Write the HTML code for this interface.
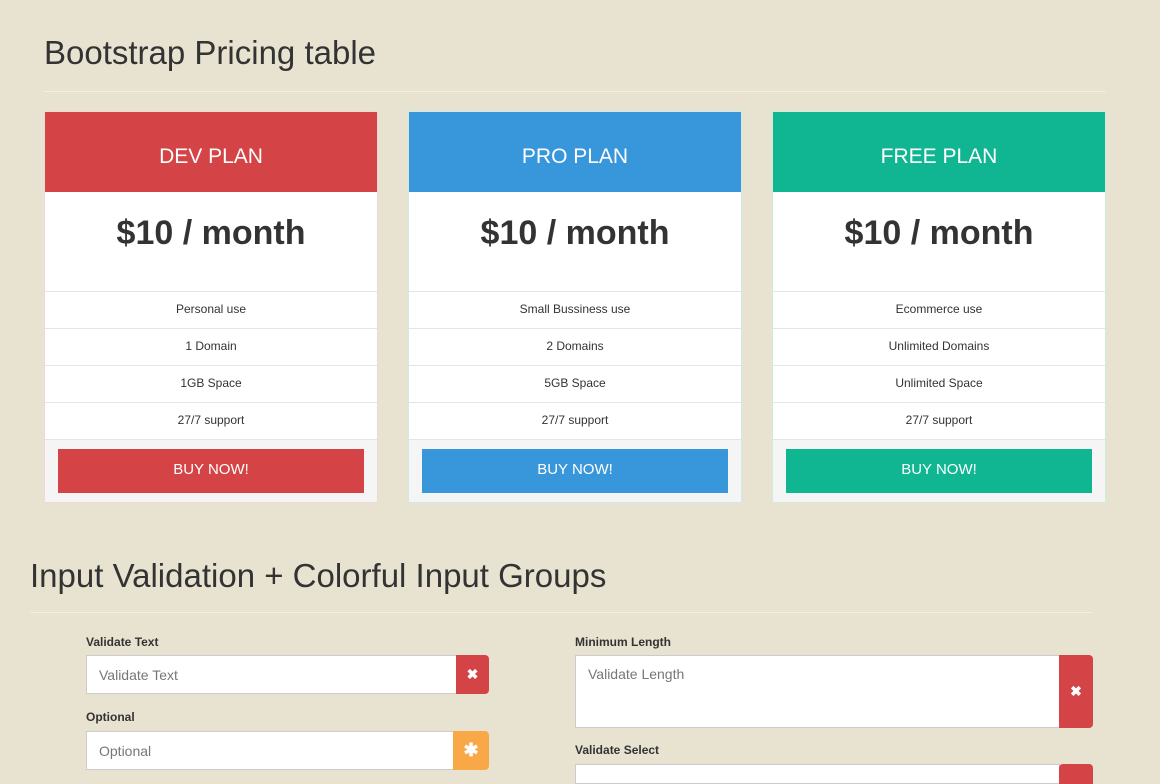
<!DOCTYPE html><html><head><style>
body{margin:0;width:1160px;height:772px;background:#e8e3d0;font-family:"Liberation Sans",sans-serif;position:relative;overflow:hidden;color:#333}
.a{position:absolute}
h1{position:absolute;margin:0;font-weight:normal;color:#333}
.card{position:absolute;top:111px;width:332px;height:390px;background:#fff;border:1px solid}
.hd{height:80px;color:#fff;font-size:21px;text-align:center;line-height:90px}
.pr{height:99px;text-align:center;font-size:34px;font-weight:bold;line-height:82px;border-bottom:1px solid #e5e5e5}
.row{height:36px;border-bottom:1px solid #e5e5e5;text-align:center;font-size:12px;line-height:35px}
.ft{background:#f5f5f5;height:62px;position:relative}
.btn{position:absolute;left:13px;top:9px;width:306px;height:44px;color:#fff;text-align:center;line-height:42px;font-size:15px}
.lbl{position:absolute;font-size:12px;font-weight:bold;color:#333}
.inp{position:absolute;background:#fff;border:1px solid #ccc;box-sizing:border-box;color:#777;font-size:14px;padding-left:12px}
.ad{position:absolute;color:#fff;text-align:center;font-weight:bold;border-radius:0 4px 4px 0;box-sizing:border-box}
</style></head><body>
<h1 style="left:44px;top:34px;font-size:33px">Bootstrap Pricing table</h1>
<div class="a" style="left:44px;top:91px;width:1062px;height:1px;background:#f2efe4"></div>

<div class="card" style="left:44px;border-color:#f0d8d8"><div class="hd" style="background:#d44345">DEV PLAN</div><div class="pr">$10 / month</div><div class="row">Personal use</div><div class="row">1 Domain</div><div class="row">1GB Space</div><div class="row">27/7 support</div><div class="ft"><div class="btn" style="background:#d44345">BUY NOW!</div></div></div>
<div class="card" style="left:408px;border-color:#cfe8ea"><div class="hd" style="background:#3897db">PRO PLAN</div><div class="pr">$10 / month</div><div class="row">Small Bussiness use</div><div class="row">2 Domains</div><div class="row">5GB Space</div><div class="row">27/7 support</div><div class="ft"><div class="btn" style="background:#3897db">BUY NOW!</div></div></div>
<div class="card" style="left:772px;border-color:#d0eadc"><div class="hd" style="background:#10b592">FREE PLAN</div><div class="pr">$10 / month</div><div class="row">Ecommerce use</div><div class="row">Unlimited Domains</div><div class="row">Unlimited Space</div><div class="row">27/7 support</div><div class="ft"><div class="btn" style="background:#10b592">BUY NOW!</div></div></div>

<h1 style="left:30px;top:557px;font-size:33px">Input Validation + Colorful Input Groups</h1>
<div class="a" style="left:30px;top:612px;width:1062px;height:1px;background:#f2efe4"></div>

<div class="lbl" style="left:86px;top:635px">Validate Text</div>
<div class="inp" style="left:86px;top:655px;width:371px;height:39px;line-height:38px">Validate Text</div>
<div class="ad" style="left:456px;top:655px;width:33px;height:39px;background:#d44345;line-height:39px;font-size:14px">✖</div>
<div class="lbl" style="left:86px;top:710px">Optional</div>
<div class="inp" style="left:86px;top:731px;width:368px;height:39px;line-height:38px">Optional</div>
<div class="ad" style="left:453px;top:731px;width:36px;height:39px;background:#f8a847;line-height:39px;font-size:18px">✱</div>

<div class="lbl" style="left:575px;top:635px">Minimum Length</div>
<div class="inp" style="left:575px;top:655px;width:485px;height:73px;padding-top:10px">Validate Length</div>
<div class="ad" style="left:1059px;top:655px;width:34px;height:73px;background:#d44345;line-height:73px;font-size:14px">✖</div>
<div class="lbl" style="left:575px;top:743px">Validate Select</div>
<div class="inp" style="left:575px;top:764px;width:485px;height:20px"></div>
<div class="ad" style="left:1059px;top:764px;width:34px;height:20px;background:#d44345;border-radius:4px 4px 0 0"></div>
</body></html>
